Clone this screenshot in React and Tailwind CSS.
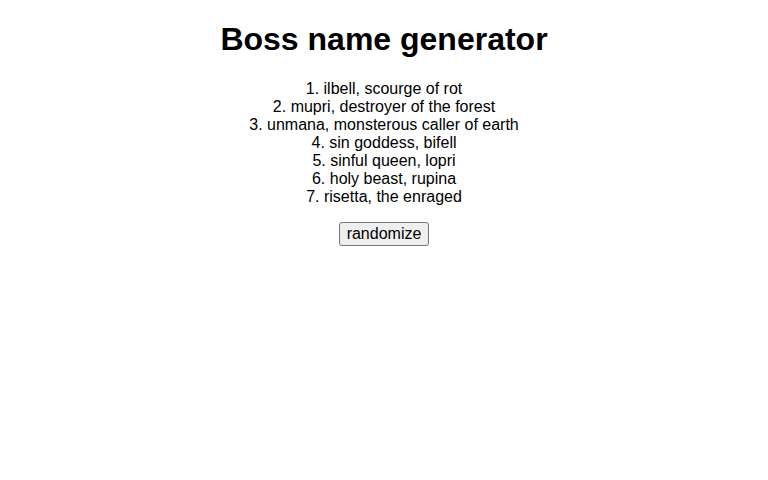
import React, { useState } from "react";

const firstNames = ["ilbell", "mupri", "unmana", "bifell", "lopri", "rupina", "risetta"];

const initialBosses = [
  "ilbell, scourge of rot",
  "mupri, destroyer of the forest",
  "unmana, monsterous caller of earth",
  "sin goddess, bifell",
  "sinful queen, lopri",
  "holy beast, rupina",
  "risetta, the enraged",
];

const titles = [
  "scourge of rot",
  "destroyer of the forest",
  "monsterous caller of earth",
  "the enraged",
];

const prefixes = ["sin goddess", "sinful queen", "holy beast"];

function makeBoss() {
  const name = firstNames[Math.floor(Math.random() * firstNames.length)];
  if (Math.random() < 0.5) {
    return `${name}, ${titles[Math.floor(Math.random() * titles.length)]}`;
  }
  return `${prefixes[Math.floor(Math.random() * prefixes.length)]}, ${name}`;
}

export default function App() {
  const [bosses, setBosses] = useState(initialBosses);

  return (
    <div className="min-h-[480px] bg-white text-black text-center font-['Liberation_Sans',Arial,sans-serif]">
      <h1 className="pt-[21px] text-[32px] leading-[37px] font-bold">
        Boss name generator
      </h1>
      <div className="mt-[22px] text-base leading-[18px]">
        {bosses.map((boss, i) => (
          <div key={i}>
            {i + 1}. {boss}
          </div>
        ))}
      </div>
      <button
        className="mt-[16px] px-[7px] h-[24px] text-base leading-[18px] bg-[#efefef] border border-[#767676] rounded-[3px]"
        onClick={() => setBosses(bosses.map(() => makeBoss()))}
      >
        randomize
      </button>
    </div>
  );
}
